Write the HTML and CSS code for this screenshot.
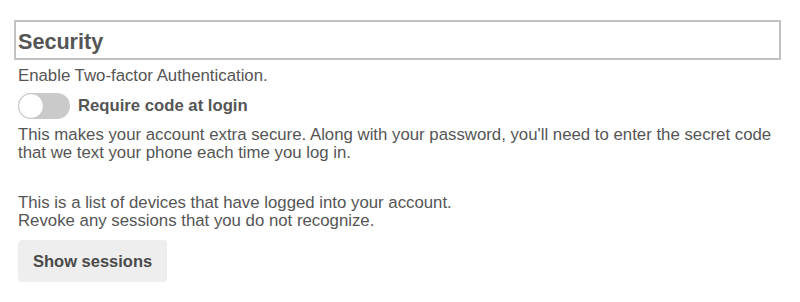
FILE: index.html
```html
<!DOCTYPE html>
<html>
<head>
<meta charset="utf-8">
<link rel="stylesheet" href="styles.css">
</head>
<body>
<div class="page">
  <div class="section-head"><h2 class="title">Security</h2></div>
  <div class="content">
    <p class="text intro">Enable Two-factor Authentication.</p>
    <label class="toggle-row">
      <span class="toggle"><span class="knob"></span></span>
      <span class="toggle-label">Require code at login</span>
    </label>
    <p class="text desc">This makes your account extra secure. Along with your password, you'll need to enter the secret code that we text your phone each time you log in.</p>
    <p class="text devices">This is a list of devices that have logged into your account.<br>Revoke any sessions that you do not recognize.</p>
    <button class="btn">Show sessions</button>
  </div>
</div>
</body>
</html>
```
FILE: styles.css
```css
html, body {
  margin: 0;
  padding: 0;
  background: #ffffff;
}
body {
  font-family: "Liberation Sans", Arial, Helvetica, sans-serif;
  color: #555555;
}
.page {
  padding: 20px 19px 0 14px;
}
.section-head {
  border: 2px solid #c2c2c2;
  padding: 8px 2px 4px 2px;
}
.title {
  margin: 0;
  font-size: 21.6px;
  line-height: 24px;
  font-weight: bold;
  color: #555555;
}
.content {
  padding-left: 4px;
}
.text {
  margin: 0;
  font-size: 16.8px;
  line-height: 18px;
  color: #555555;
}
.intro {
  margin-top: 7px;
}
.toggle-row {
  display: flex;
  align-items: center;
  gap: 8px;
  margin-top: 8px;
  height: 26px;
}
.toggle {
  position: relative;
  display: block;
  width: 52px;
  height: 26px;
  border-radius: 13px;
  background: #cacaca;
}
.knob {
  position: absolute;
  left: 0;
  top: 0;
  width: 24px;
  height: 24px;
  border-radius: 50%;
  background: #ffffff;
  border: 1px solid #c4c4c4;
}
.toggle-label {
  font-size: 16.7px;
  line-height: 18px;
  font-weight: bold;
  color: #555555;
}
.desc {
  margin-top: 7px;
}
.devices {
  margin-top: 32px;
}
.btn {
  display: block;
  margin-top: 10px;
  height: 42px;
  padding: 0 15px;
  border: none;
  border-radius: 4px;
  background: #eeeeee;
  font-family: "Liberation Sans", Arial, Helvetica, sans-serif;
  font-size: 16.5px;
  font-weight: bold;
  color: #4a4a4a;
  white-space: nowrap;
}
```
